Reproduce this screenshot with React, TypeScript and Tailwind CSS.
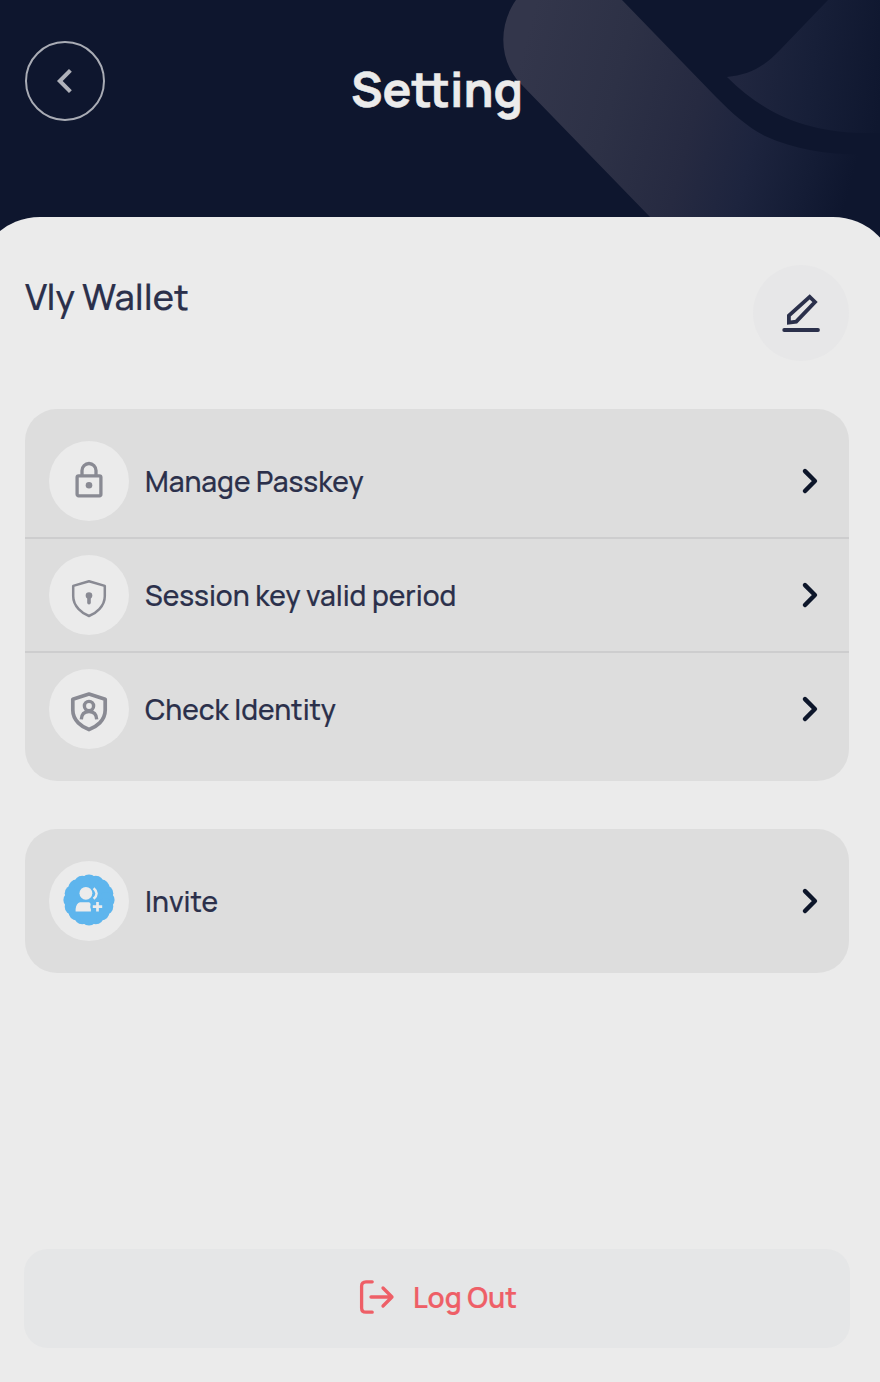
import type { ReactNode } from "react";

function HeaderArt() {
  return (
    <svg className="absolute right-0 top-0" width="400" height="240" viewBox="480 0 400 240" fill="none" aria-hidden="true">
      <defs>
        <linearGradient id="band" x1="520" y1="60" x2="860" y2="150" gradientUnits="userSpaceOnUse">
          <stop offset="0" stopColor="#33364b" />
          <stop offset="0.28" stopColor="#2d3146" />
          <stop offset="0.52" stopColor="#262a41" />
          <stop offset="0.7" stopColor="#1d243e" />
          <stop offset="0.88" stopColor="#141c35" />
          <stop offset="1" stopColor="#0e162e" />
        </linearGradient>
        <linearGradient id="leaf" x1="740" y1="70" x2="882" y2="85" gradientUnits="userSpaceOnUse">
          <stop offset="0" stopColor="#20263f" />
          <stop offset="0.5" stopColor="#171f38" />
          <stop offset="1" stopColor="#0f172f" />
        </linearGradient>
      </defs>
      <path d="M516 0C498 25 499 61 520 83L652 219V240H880V154C838 156 800 152 765 136C746 126 733 114 716 97L622 0Z" fill="url(#band)" />
      <path d="M727 77C748 75 763 68 780 50L828 0H880V133C814 135 768 118 727 77Z" fill="url(#leaf)" />
    </svg>
  );
}

function LockIcon() {
  return (
    <svg width="40" height="40" viewBox="0 0 40 40" fill="none" stroke="#898a93" strokeWidth="3.3" aria-hidden="true">
      <rect x="8.1" y="14.8" width="23.8" height="20" rx="1.5" />
      <path d="M13 15V9.5a7 7 0 0 1 14 0V15" />
      <circle cx="20" cy="24.3" r="3.3" fill="#898a93" stroke="none" />
    </svg>
  );
}

function KeyShieldIcon() {
  return (
    <svg className="overflow-visible" width="40" height="40" viewBox="0 0 40 40" fill="none" stroke="#898a93" strokeWidth="2.5" strokeLinejoin="round" aria-hidden="true">
      <path d="M20 6.2L35.8 10.9V21.2C35.8 31.5 26.5 38.6 20 41C13.5 38.6 4.2 31.5 4.2 21.2V10.9Z" />
      <circle cx="20" cy="20.5" r="3.3" fill="#898a93" stroke="none" />
      <path d="M20 22v5.8" strokeWidth="3.6" strokeLinecap="round" />
    </svg>
  );
}

function IdentityIcon() {
  return (
    <svg className="overflow-visible" width="40" height="40" viewBox="0 0 40 40" fill="none" stroke="#898a93" strokeWidth="3.7" strokeLinejoin="round" aria-hidden="true">
      <path d="M20 5L36.2 10.2V21.1C36.2 31.8 27 38 20 40.6C13 38 3.8 31.8 3.8 21.1V10.2Z" />
      <circle cx="20" cy="17" r="4.6" strokeWidth="3.4" />
      <path d="M12.3 30.4C12.5 25.6 15.2 22.6 20 22.6C24.8 22.6 27.5 25.6 27.7 30.4" strokeWidth="3.4" />
    </svg>
  );
}

function InviteIcon() {
  const petals = Array.from({ length: 16 }, (_, i) => {
    const a = (i * Math.PI) / 8;
    return [26 + 17.5 * Math.sin(a), 26 - 17.5 * Math.cos(a)];
  });
  return (
    <svg className="-mt-0.5 -ml-px" width="52" height="52" viewBox="0 0 52 52" fill="none" aria-hidden="true">
      <g fill="#5eb5ed">
        <circle cx="26" cy="26" r="24" />
        {petals.map(([x, y], i) => (
          <circle key={i} cx={x} cy={y} r="8.1" />
        ))}
      </g>
      <circle cx="22.9" cy="19.3" r="6.4" fill="#ececec" />
      <path d="M30.6 14.2Q36.6 19.4 30.6 24.8" stroke="#ececec" strokeWidth="2.5" />
      <path d="M17 28.2H26Q27.6 28.4 27.6 30.4Q26.6 33 27.9 35.2V37.5H12.6V35Q13.2 29.4 17 28.2Z" fill="#ececec" />
      <path d="M34.5 28V37.4M29.8 32.7H39.2" stroke="#ececec" strokeWidth="2.7" />
    </svg>
  );
}

function Chevron() {
  return (
    <svg width="40" height="40" viewBox="0 0 40 40" fill="none" stroke="#0d162a" strokeWidth="4.5" strokeLinecap="round" strokeLinejoin="round" aria-hidden="true">
      <path d="M15 10.2L24.9 20L15 30" />
    </svg>
  );
}

function Row({ icon, label }: { icon: ReactNode; label: string }) {
  return (
    <button className="flex w-full items-center px-6 py-4 text-left">
      <span className="flex size-20 items-center justify-center rounded-full bg-[#ebebeb]">{icon}</span>
      <span className="ml-4 flex-1 whitespace-nowrap text-[28px] leading-9 font-medium text-[#2b304b] [-webkit-text-stroke:0.2px_#2b304b]">{label}</span>
      <span className="-mr-[5px]">
        <Chevron />
      </span>
    </button>
  );
}

export default function App() {
  return (
    <div className="relative flex h-[1382px] w-[880px] flex-col overflow-hidden bg-[#0e162e] font-['Manrope','Inter',sans-serif]">
      <HeaderArt />
      <header className="relative grid h-[217px] shrink-0 grid-cols-[80px_1fr_80px] items-start pl-[25px] pr-[31px] pt-[41px]">
        <button aria-label="Back" className="flex size-20 items-center justify-center rounded-full border-2 border-[#a9acb5]">
          <svg width="40" height="40" viewBox="0 0 40 40" fill="none" stroke="#afb1b9" strokeWidth="4" aria-hidden="true">
            <path d="M25.4 9.3L14.8 20L25.4 30.7" />
          </svg>
        </button>
        <h1 className="pt-[18px] text-center text-[48px] leading-[60px] font-bold text-[#ebebeb] [-webkit-text-stroke:0.5px_#ebebeb]">Setting</h1>
      </header>

      <main className="relative -ml-6 -mr-[17px] flex flex-1 flex-col rounded-t-[64px] bg-[#ebebeb] pl-[49px] pr-12 pt-12">
        <div className="flex h-24 items-start justify-between">
          <h2 className="pt-[9px] text-[36px] leading-[46px] font-medium text-[#2b304b] [-webkit-text-stroke:0.2px_#2b304b]">Vly Wallet</h2>
          <button aria-label="Edit name" className="flex size-24 items-center justify-center rounded-full bg-[#e7e7e8]">
            <svg width="48" height="48" viewBox="0 0 48 48" fill="none" stroke="#2b304b" strokeWidth="3.8" aria-hidden="true">
              <path d="M32.7 7.9L38 13L19.2 32.6L11.9 33.6V26.6Z" />
              <path d="M7.2 41H41" strokeWidth="3.8" strokeLinecap="round" />
            </svg>
          </button>
        </div>

        <section className="mt-12 divide-y-2 divide-[#cdcdce] rounded-[32px] bg-[#dddddd] py-4">
          <Row icon={<LockIcon />} label="Manage Passkey" />
          <Row icon={<KeyShieldIcon />} label="Session key valid period" />
          <Row icon={<IdentityIcon />} label="Check Identity" />
        </section>

        <section className="mt-12 rounded-[32px] bg-[#dddddd] py-4">
          <Row icon={<InviteIcon />} label="Invite" />
        </section>

        <button className="-mx-px mb-[34px] mt-auto flex h-[99px] items-center justify-center rounded-3xl bg-[#e5e6e7] pb-[3px] text-[#ee5f67]">
          <svg width="40" height="40" viewBox="0 0 40 40" fill="none" stroke="currentColor" strokeWidth="3.3" strokeLinecap="round" strokeLinejoin="round" aria-hidden="true">
            <path d="M15.2 4.8H9Q4.6 4.8 4.6 9V31Q4.6 35.2 9 35.2H15.2" />
            <path d="M14 20H35M26 11L35 20L26 29" />
          </svg>
          <span className="ml-4 whitespace-nowrap text-[28px] leading-9 font-semibold [-webkit-text-stroke:0.2px_#ee5f67]">Log Out</span>
        </button>
      </main>
    </div>
  );
}
